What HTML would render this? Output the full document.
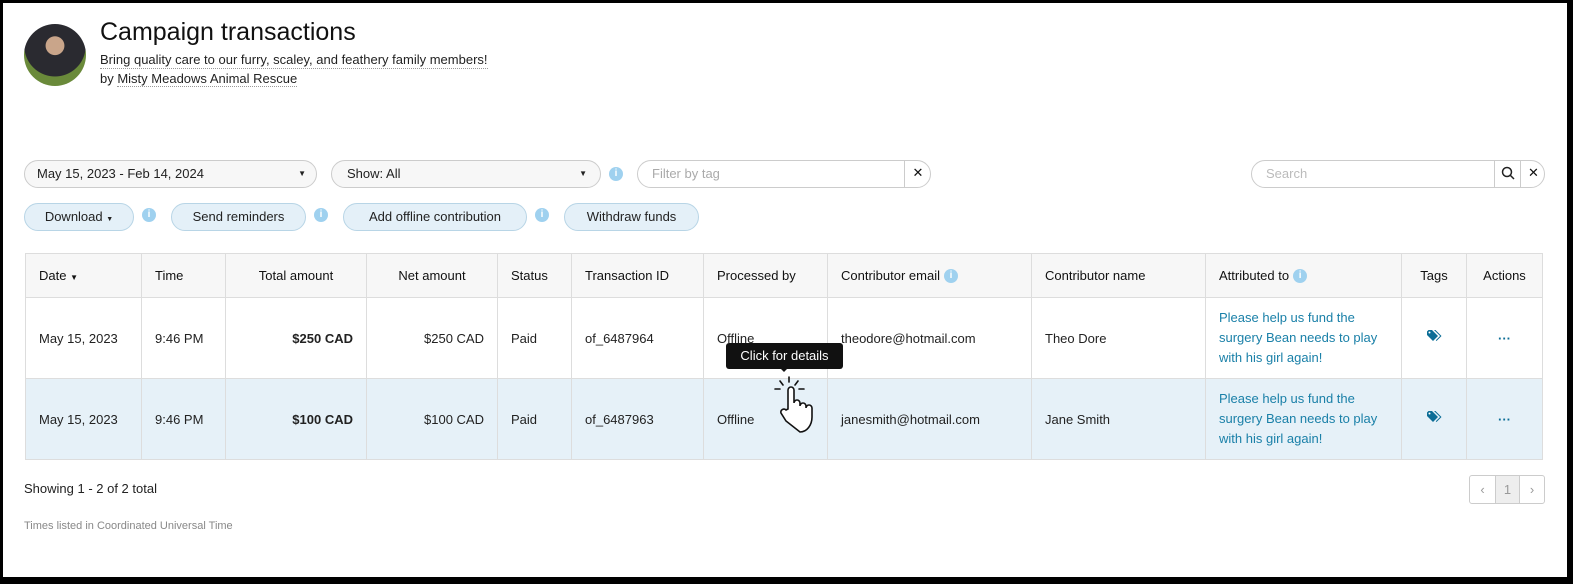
<!DOCTYPE html>
<html><head><meta charset="utf-8"><style>
*{box-sizing:border-box;margin:0;padding:0}
html,body{width:1573px;height:584px;overflow:hidden;background:#000}
body{font-family:"Liberation Sans",sans-serif;color:#222;position:relative}
.page{position:absolute;left:3px;top:3px;width:1564px;height:574px;background:#fff}
.abs{position:absolute}
.pill{position:absolute;height:28px;border:1px solid #ccc;border-radius:14px;font-size:13px;line-height:26px;padding-left:12px;background:#f7f7f7}
.btn{position:absolute;height:28px;border:1px solid #b8d5e6;border-radius:14px;background:#e4f0f8;font-size:13px;line-height:26px;text-align:center;color:#222}
.info{position:absolute;width:14px;height:14px;border-radius:50%;background:#9fd1ef;color:#fff;font-size:10px;font-weight:bold;text-align:center;line-height:14px}
table{position:absolute;left:22px;top:250px;border-collapse:collapse;font-size:13px;table-layout:fixed;width:1517px}
td,th{border:1px solid #ddd;padding:0 13px;text-align:left;vertical-align:middle}
th{height:44px;background:#f7f7f7;font-weight:normal;color:#111}
td{height:81px}
tr.b td{background:#e6f1f8}
.r{text-align:right}.c{text-align:center}
.link{color:#1a80a8;line-height:20px}
.ii{display:inline-block;width:14px;height:14px;border-radius:50%;background:#9fd1ef;color:#fff;font-size:10px;font-weight:bold;text-align:center;line-height:14px;vertical-align:middle;margin-left:4px}
</style></head><body><div class="page">
<div class="abs" style="left:21px;top:21px;width:62px;height:62px;border-radius:50%;background:radial-gradient(circle at 50% 35%,#c9a58a 0 18%,#2a2a30 19% 60%,#6a8a3a 61%)"></div>
<div class="abs" style="left:97px;top:15px;font-size:25px;color:#111">Campaign transactions</div>
<div class="abs" style="left:97px;top:49px;font-size:13px;border-bottom:1px dotted #999;padding-bottom:1px">Bring quality care to our furry, scaley, and feathery family members!</div>
<div class="abs" style="left:97px;top:68px;font-size:13px">by <span style="border-bottom:1px dotted #999">Misty Meadows Animal Rescue</span></div>

<div class="pill" style="left:21px;top:157px;width:293px">May 15, 2023 - Feb 14, 2024<span class="abs" style="right:10px;top:0;font-size:8px">▼</span></div>
<div class="pill" style="left:328px;top:157px;width:270px;padding-left:15px">Show: All<span class="abs" style="right:13px;top:0;font-size:8px">▼</span></div>
<div class="info" style="left:606px;top:164px">i</div>
<div class="abs" style="left:634px;top:157px;width:294px;height:28px;border:1px solid #ccc;border-radius:14px;font-size:13px;line-height:26px;padding-left:14px;color:#aaa">Filter by tag<span class="abs" style="left:266px;top:-1px;width:27px;height:28px;border-left:1px solid #ccc;color:#111;text-align:center">✕</span></div>
<div class="abs" style="left:1248px;top:157px;width:294px;height:28px;border:1px solid #ccc;border-radius:14px;font-size:13px;line-height:26px;padding-left:14px;color:#bbb">Search<span class="abs" style="left:242px;top:-1px;width:26px;height:28px;border-left:1px solid #ccc;color:#111;text-align:center"><svg width="14" height="14" viewBox="0 0 14 14" style="margin-top:6px"><circle cx="6" cy="6" r="4.5" fill="none" stroke="#222" stroke-width="1.5"/><path d="M9.5 9.5L13 13" stroke="#222" stroke-width="1.5"/></svg></span><span class="abs" style="left:268px;top:-1px;width:26px;height:28px;border-left:1px solid #ccc;color:#111;text-align:center">✕</span></div>

<div class="btn" style="left:21px;top:200px;width:110px">Download <span style="font-size:7px">▼</span></div>
<div class="info" style="left:139px;top:205px">i</div>
<div class="btn" style="left:168px;top:200px;width:135px">Send reminders</div>
<div class="info" style="left:311px;top:205px">i</div>
<div class="btn" style="left:340px;top:200px;width:184px">Add offline contribution</div>
<div class="info" style="left:532px;top:205px">i</div>
<div class="btn" style="left:561px;top:200px;width:135px">Withdraw funds</div>

<table>
<colgroup><col style="width:116px"><col style="width:84px"><col style="width:141px"><col style="width:131px"><col style="width:74px"><col style="width:132px"><col style="width:124px"><col style="width:204px"><col style="width:174px"><col style="width:196px"><col style="width:65px"><col style="width:76px"></colgroup>
<tr><th>Date <span style="font-size:8px">▼</span></th><th>Time</th><th class="c">Total amount</th><th class="c">Net amount</th><th>Status</th><th>Transaction ID</th><th>Processed by</th><th>Contributor email<span class="ii">i</span></th><th>Contributor name</th><th>Attributed to<span class="ii">i</span></th><th class="c">Tags</th><th class="c" style="padding:0">Actions</th></tr>
<tr><td>May 15, 2023</td><td>9:46 PM</td><td class="r"><b>$250 CAD</b></td><td class="r">$250 CAD</td><td>Paid</td><td>of_6487964</td><td>Offline</td><td>theodore@hotmail.com</td><td>Theo Dore</td><td class="link">Please help us fund the surgery Bean needs to play with his girl again!</td><td class="c"><svg width="15" height="13" viewBox="0 0 15 13"><path d="M0 1.5V5l6 6 5-5-6-6H1.5z" fill="#0b6d96"/><path d="M7 0h1.5l6 6-5 5-.7-.7 4.3-4.3z" fill="#0b6d96"/><circle cx="2.5" cy="2.5" r="1" fill="#fff"/></svg></td><td class="c" style="color:#0b6d96;font-weight:bold;padding:0">···</td></tr>
<tr class="b"><td>May 15, 2023</td><td>9:46 PM</td><td class="r"><b>$100 CAD</b></td><td class="r">$100 CAD</td><td>Paid</td><td>of_6487963</td><td>Offline</td><td>janesmith@hotmail.com</td><td>Jane Smith</td><td class="link">Please help us fund the surgery Bean needs to play with his girl again!</td><td class="c"><svg width="15" height="13" viewBox="0 0 15 13"><path d="M0 1.5V5l6 6 5-5-6-6H1.5z" fill="#0b6d96"/><path d="M7 0h1.5l6 6-5 5-.7-.7 4.3-4.3z" fill="#0b6d96"/><circle cx="2.5" cy="2.5" r="1" fill="#fff"/></svg></td><td class="c" style="color:#0b6d96;font-weight:bold;padding:0">···</td></tr>
</table>

<div class="abs" style="left:723px;top:340px;width:117px;height:26px;background:#111;color:#fff;border-radius:3px;font-size:13px;line-height:26px;text-align:center">Click for details</div>
<div class="abs" style="left:777px;top:365px;width:0;height:0;border-left:4px solid transparent;border-right:4px solid transparent;border-top:4px solid #111"></div>
<svg class="abs" style="left:766px;top:372px" width="56" height="62" viewBox="0 0 56 62"><g fill="none" stroke="#111" stroke-width="1.6" stroke-linecap="round"><path d="M20 2v5M11 6l3 4M29 6l-3 4M6 14h5M30 14h5"/><path d="M19 34V15a3 3 0 0 1 6 0v13a3 3 0 0 1 6 0v3a3 3 0 0 1 6 0v2a3 3 0 0 1 6 0v9c0 8-5 15-12 15l-14-11-5-8a3 3 0 0 1 5-3z" fill="#fff"/></g></svg>

<div class="abs" style="left:21px;top:478px;font-size:13px">Showing 1 - 2 of 2 total</div>
<div class="abs" style="left:1466px;top:472px;width:76px;height:29px;border:1px solid #ccc;border-radius:3px;font-size:13px;color:#999;line-height:27px"><span class="abs" style="left:0;width:25px;text-align:center">‹</span><span class="abs" style="left:25px;width:25px;text-align:center;background:#eee;border-left:1px solid #ccc;border-right:1px solid #ccc;height:27px">1</span><span class="abs" style="left:50px;width:24px;text-align:center">›</span></div>
<div class="abs" style="left:21px;top:517px;font-size:11px;color:#888">Times listed in Coordinated Universal Time</div>
</div></body></html>
